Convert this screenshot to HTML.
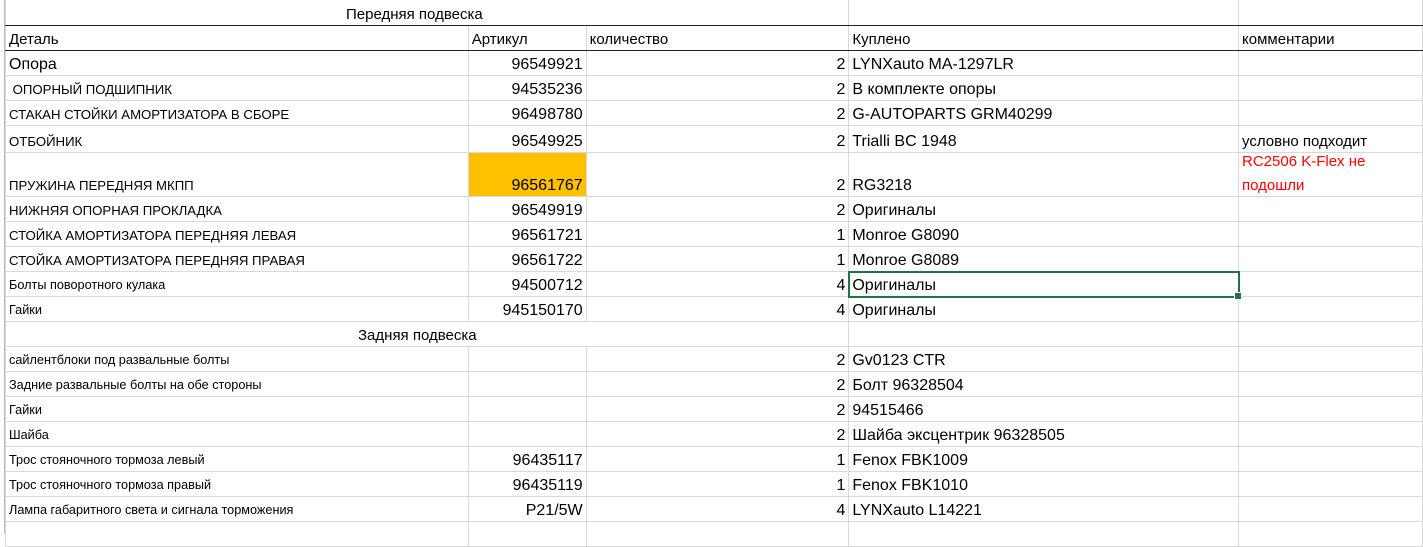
<!DOCTYPE html>
<html><head><meta charset="utf-8"><style>
body{margin:0;width:1423px;height:534px;background:#fff;overflow:hidden;position:relative;font-family:"Liberation Sans",Arial,sans-serif;}
.edge{position:absolute;left:4px;top:0;width:1px;height:534px;background:#bbb}
table{position:absolute;left:5px;top:-1px;border-collapse:collapse;table-layout:fixed}
td{border:1px solid #d9d9d9;padding:0 3px 1px 3px;vertical-align:bottom;white-space:nowrap;overflow:visible;font-size:16px;color:#000;line-height:19px}
td.a{font-size:12.7px;line-height:17px;padding-bottom:2px}
td.u{font-size:13.2px;line-height:17px;padding-bottom:2px}
td.r{text-align:right}
.hb{border-bottom:1px solid #222}
.red{position:absolute;left:1242px;top:150px;color:#ff0000;font-size:15px;line-height:24px;width:180px}
</style></head><body>
<div class="edge"></div>
<table>
<colgroup><col style="width:463px"><col style="width:118px"><col style="width:263px"><col style="width:390px"><col style="width:184px"></colgroup>
<tr style="height:26px"><td colspan="3" class="hb" style="padding-left:340px;font-size:15px;border-top-color:#fff">Передняя подвеска</td><td class="hb" style="border-top-color:#fff"></td><td class="hb" style="border-top-color:#fff"></td></tr>
<tr style="height:25px"><td class="hb" style="font-size:15px">Деталь</td><td class="hb" style="font-size:15px">Артикул</td><td class="hb" style="font-size:15px">количество</td><td class="hb" style="font-size:15px">Куплено</td><td class="hb" style="font-size:15px">комментарии</td></tr>
<tr style="height:25px"><td>Опора</td><td class="r">96549921</td><td class="r">2</td><td>LYNXauto MA-1297LR</td><td></td></tr>
<tr style="height:25px"><td class="u">&nbsp;ОПОРНЫЙ ПОДШИПНИК</td><td class="r">94535236</td><td class="r">2</td><td>В комплекте опоры</td><td></td></tr>
<tr style="height:25px"><td class="u">СТАКАН СТОЙКИ АМОРТИЗАТОРА В СБОРЕ</td><td class="r">96498780</td><td class="r">2</td><td>G-AUTOPARTS GRM40299</td><td></td></tr>
<tr style="height:27px"><td class="u">ОТБОЙНИК</td><td class="r">96549925</td><td class="r">2</td><td>Trialli BC 1948</td><td style="font-size:15px">условно подходит</td></tr>
<tr style="height:44px"><td class="u">ПРУЖИНА ПЕРЕДНЯЯ МКПП</td><td class="r" style="background:#ffc000">96561767</td><td class="r">2</td><td>RG3218</td><td></td></tr>
<tr style="height:25px"><td class="u">НИЖНЯЯ ОПОРНАЯ ПРОКЛАДКА</td><td class="r">96549919</td><td class="r">2</td><td>Оригиналы</td><td></td></tr>
<tr style="height:25px"><td class="u">СТОЙКА АМОРТИЗАТОРА ПЕРЕДНЯЯ ЛЕВАЯ</td><td class="r">96561721</td><td class="r">1</td><td>Monroe G8090</td><td></td></tr>
<tr style="height:25px"><td class="u">СТОЙКА АМОРТИЗАТОРА ПЕРЕДНЯЯ ПРАВАЯ</td><td class="r">96561722</td><td class="r">1</td><td>Monroe G8089</td><td></td></tr>
<tr style="height:25px"><td class="a">Болты поворотного кулака</td><td class="r">94500712</td><td class="r">4</td><td style="outline:2px solid #217346;outline-offset:-1px;position:relative">Оригиналы<span style="position:absolute;right:-4px;bottom:-4px;width:6px;height:6px;background:#217346;border:1px solid #fff"></span></td><td></td></tr>
<tr style="height:25px"><td class="a">Гайки</td><td class="r">945150170</td><td class="r">4</td><td>Оригиналы</td><td></td></tr>
<tr style="height:25px"><td colspan="3" style="padding-left:352px;font-size:15px">Задняя подвеска</td><td></td><td></td></tr>
<tr style="height:25px"><td class="a">сайлентблоки под развальные болты</td><td></td><td class="r">2</td><td>Gv0123 CTR</td><td></td></tr>
<tr style="height:25px"><td class="a">Задние развальные болты на обе стороны</td><td></td><td class="r">2</td><td>Болт 96328504</td><td></td></tr>
<tr style="height:25px"><td class="a">Гайки</td><td></td><td class="r">2</td><td>94515466</td><td></td></tr>
<tr style="height:25px"><td class="a">Шайба</td><td></td><td class="r">2</td><td>Шайба эксцентрик 96328505</td><td></td></tr>
<tr style="height:25px"><td class="a">Трос стояночного тормоза левый</td><td class="r">96435117</td><td class="r">1</td><td>Fenox FBK1009</td><td></td></tr>
<tr style="height:25px"><td class="a">Трос стояночного тормоза правый</td><td class="r">96435119</td><td class="r">1</td><td>Fenox FBK1010</td><td></td></tr>
<tr style="height:25px"><td class="a">Лампа габаритного света и сигнала торможения</td><td class="r">P21/5W</td><td class="r">4</td><td>LYNXauto L14221</td><td></td></tr>
<tr style="height:25px"><td></td><td></td><td></td><td></td><td></td></tr>
</table>
<div class="red">RC2506 K-Flex не<br>подошли</div>
</body></html>
